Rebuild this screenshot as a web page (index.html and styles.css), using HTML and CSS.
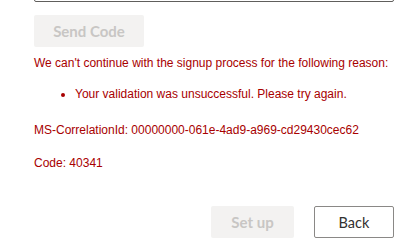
FILE: index.html
```html
<!DOCTYPE html>
<html>
<head>
<meta charset="utf-8">
<link rel="stylesheet" href="styles.css">
</head>
<body>
<div class="page">
  <div class="input"></div>
  <button class="btn btn-send" disabled>Send Code</button>
  <div class="error">
    <p class="msg">We can't continue with the signup process for the following reason:</p>
    <ul class="reasons">
      <li>Your validation was unsuccessful. Please try again.</li>
    </ul>
    <p class="msg">MS-CorrelationId: 00000000-061e-4ad9-a969-cd29430cec62</p>
    <p class="msg">Code: 40341</p>
  </div>
  <div class="actions">
    <button class="btn btn-setup" disabled>Set up</button>
    <button class="btn btn-back">Back</button>
  </div>
</div>
</body>
</html>
```
FILE: styles.css
```css
* { box-sizing: border-box; }
html, body { margin: 0; padding: 0; background: #ffffff; }
body {
  width: 414px;
  height: 250px;
  overflow: hidden;
  font-family: "Segoe UI", "Liberation Sans", Arial, sans-serif;
}
.page {
  padding-left: 34px;
  width: 394px;
  display: flex;
  flex-direction: column;
}
.input {
  height: 32px;
  margin-top: -30px;
  width: 360px;
  border: 1px solid #605e5c;
  border-radius: 2px;
}
.btn {
  font-family: Lato, "Liberation Sans", sans-serif;
  font-size: 15px;
  font-weight: 700;
  height: 32px;
  border-radius: 2px;
  padding: 0;
}
.btn-send {
  margin-top: 13px;
  width: 110px;
  background: #f3f2f1;
  color: #c8c6c4;
  border: none;
}
.error {
  color: #a80000;
  font-size: 12px;
  line-height: 18px;
  white-space: nowrap;
}
.msg { margin: 0; }
.error .msg:first-child { margin-top: 7px; }
.reasons {
  margin: 13px 0 18px 0;
  padding-left: 41px;
}
.reasons li { padding-left: 0; }
.error .msg + .msg { margin-top: 15px; }
.actions {
  margin-top: 34px;
  width: 360px;
  display: flex;
  justify-content: flex-end;
  gap: 20px;
}
.btn-setup {
  width: 83px;
  background: #f3f2f1;
  color: #c8c6c4;
  border: none;
}
.btn-back {
  width: 80px;
  background: #ffffff;
  color: #323130;
  border: 1px solid #8a8886;
  font-weight: 400;
  font-size: 14.5px;
}
```
